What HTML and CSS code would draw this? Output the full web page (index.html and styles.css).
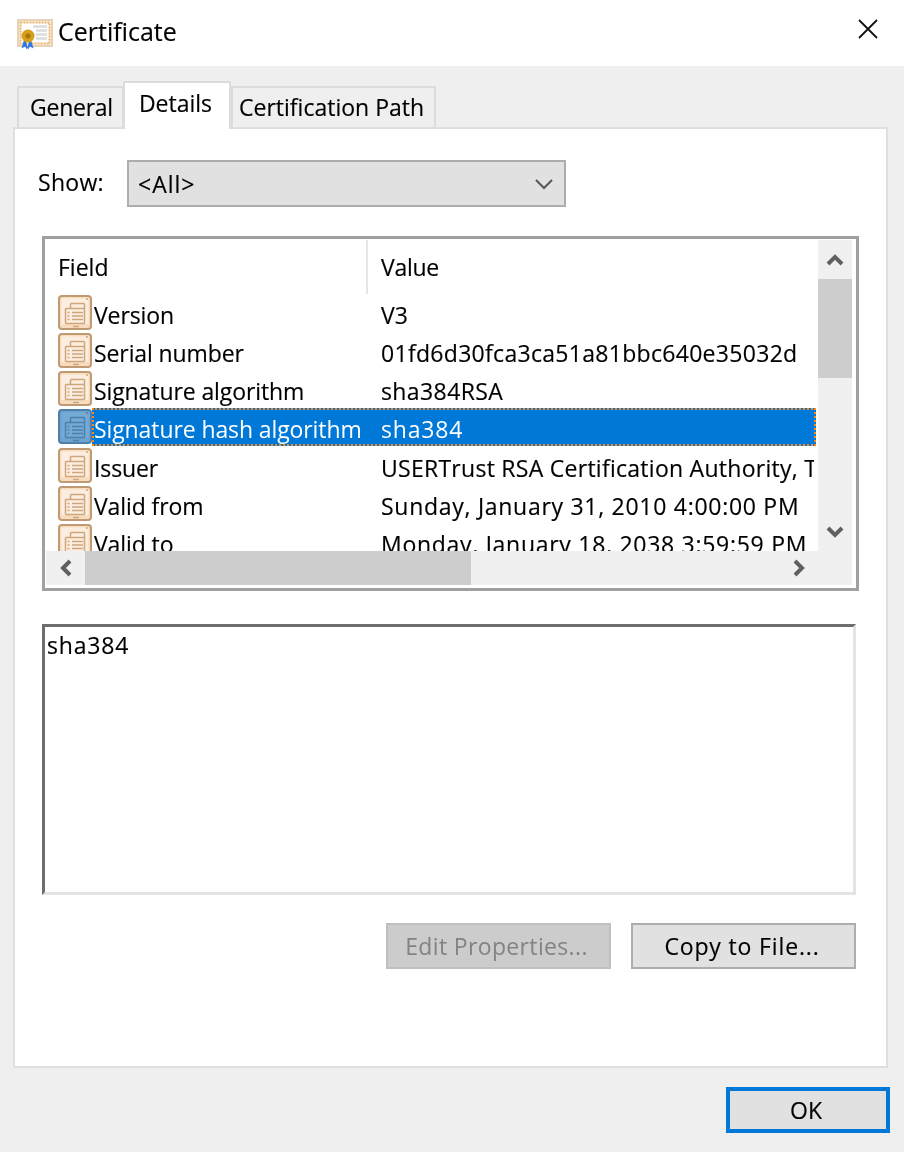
FILE: index.html
```html
<!DOCTYPE html>
<html lang="en">
<head>
<meta charset="utf-8">
<title>Certificate</title>
<link rel="stylesheet" href="styles.css">
</head>
<body>
<svg class="defs" width="0" height="0" aria-hidden="true">
  <symbol id="field-icon" viewBox="0 0 34 35">
    <rect class="ic-outer" x="1" y="1" width="32" height="33" rx="3"/>
    <rect class="ic-inner" x="3.500" y="3.500" width="27" height="25.500"/>
    <path class="ic-line" d="M7.500 13.500h19M7.500 13.500v15M26.500 8.500v20M7.500 28.500h19M12.500 8.500h14M12.500 8.500v5"/>
    <path class="ic-dash" d="M14 17.500h11M14 21h11M14 24.500h11M9.500 17.500h2M9.500 21h2M9.500 24.500h2M15 31.500h6M28 4h2"/>
  </symbol>
</svg>
<header class="titlebar">
  <svg class="cert-icon" width="38" height="32" viewBox="0 0 38 32">
    <rect x="1" y="1" width="34" height="26" fill="#fdf3e4" stroke="#e6d2b4" stroke-width="2"/>
    <rect x="3.500" y="3.500" width="29" height="21" fill="#fff" stroke="#eeb46e" stroke-width="2" stroke-dasharray="2 1"/>
    <path d="M16 7.500h14M19 11.500h11M19 15.500h11M19 19.500h11" stroke="#dcdcdc" stroke-width="2.500"/>
    <path d="M7 21l-2.500 8.500 3.500-2 2 3 2-8zM14 21l2.500 8.500-3.500-2-2 3-2-8z" fill="#2f76e6"/>
    <circle cx="11" cy="17" r="6.500" fill="#d79e1a"/>
    <circle cx="11" cy="17" r="2.500" fill="#a8760f"/>
  </svg>
  <h1 class="title">Certificate</h1>
  <svg class="close" width="20" height="20" viewBox="0 0 20 20"><path d="M1 1l18 18M19 1L1 19" stroke="#111" stroke-width="1.800" fill="none"/></svg>
</header>
<main class="dialog">
  <nav class="tabs">
    <div class="tab tab-general">General</div>
    <div class="tab tab-active">Details</div>
    <div class="tab tab-path">Certification Path</div>
  </nav>
  <section class="panel">
    <div class="show-row">
      <span class="show-label">Show:</span>
      <div class="select">
        <span class="select-text">&lt;All&gt;</span>
        <svg width="20" height="12" viewBox="0 0 20 12"><path d="M2 2l8 8 8-8" stroke="#555" stroke-width="2" fill="none"/></svg>
      </div>
    </div>
    <div class="list">
      <div class="viewport">
        <div class="list-head">
          <div class="head-field">Field</div>
          <div class="head-value">Value</div>
        </div>
        <div class="row"><svg class="row-icon"><use href="#field-icon"/></svg><div class="cells"><span class="cell-field">Version</span><span class="cell-value">V3</span></div></div>
        <div class="row"><svg class="row-icon"><use href="#field-icon"/></svg><div class="cells"><span class="cell-field">Serial number</span><span class="cell-value sp-serial">01fd6d30fca3ca51a81bbc640e35032d</span></div></div>
        <div class="row"><svg class="row-icon"><use href="#field-icon"/></svg><div class="cells"><span class="cell-field">Signature algorithm</span><span class="cell-value sp-algo">sha384RSA</span></div></div>
        <div class="row row-selected"><svg class="row-icon"><use href="#field-icon"/></svg><div class="cells"><span class="cell-field">Signature hash algorithm</span><span class="cell-value sp-hash">sha384</span></div></div>
        <div class="row"><svg class="row-icon"><use href="#field-icon"/></svg><div class="cells"><span class="cell-field">Issuer</span><span class="cell-value sp-issuer">USERTrust RSA Certification Authority, T</span></div></div>
        <div class="row"><svg class="row-icon"><use href="#field-icon"/></svg><div class="cells"><span class="cell-field">Valid from</span><span class="cell-value sp-date">Sunday, January 31, 2010 4:00:00 PM</span></div></div>
        <div class="row"><svg class="row-icon"><use href="#field-icon"/></svg><div class="cells"><span class="cell-field">Valid to</span><span class="cell-value sp-date">Monday, January 18, 2038 3:59:59 PM</span></div></div>
      </div>
      <div class="vbar">
        <div class="bar-btn-v"><svg width="18" height="12" viewBox="0 0 18 12"><path d="M2 10l7-7 7 7" class="chev"/></svg></div>
        <div class="vthumb"></div>
        <div class="bar-fill"></div>
        <div class="bar-btn-v"><svg width="18" height="12" viewBox="0 0 18 12"><path d="M2 2l7 7 7-7" class="chev"/></svg></div>
      </div>
      <div class="hbar">
        <div class="bar-btn-h"><svg width="12" height="18" viewBox="0 0 12 18"><path d="M10 2L3 9l7 7" class="chev"/></svg></div>
        <div class="hthumb"></div>
        <div class="bar-fill"></div>
        <div class="bar-btn-h"><svg width="12" height="18" viewBox="0 0 12 18"><path d="M2 2l7 7-7 7" class="chev"/></svg></div>
      </div>
      <div class="corner"></div>
    </div>
    <div class="detail"><span class="sp-hash">sha384</span></div>
    <div class="actions">
      <div class="btn btn-disabled">Edit Properties...</div>
      <div class="btn btn-copy">Copy to File...</div>
    </div>
  </section>
  <footer class="footer">
    <div class="btn btn-default">OK</div>
  </footer>
</main>
</body>
</html>
```
FILE: styles.css
```css
* { box-sizing: border-box; }
html, body { margin: 0; padding: 0; }
html { background: #efefef; }
body {
  width: 904px;
  height: 1152px;
  overflow: hidden;
  display: flex;
  flex-direction: column;
  background: #efefef;
  color: #000;
  font-family: "Open Sans", "Noto Sans", sans-serif;
  font-size: 23px;
  line-height: 30px;
  filter: blur(0.45px);
  -webkit-text-stroke: 0.15px #000;
}
.defs { position: absolute; }
.titlebar {
  height: 66px;
  flex: none;
  display: flex;
  align-items: center;
  padding: 0 26px 4px 17px;
  background: #fff;
}
.cert-icon { margin-top: 8px; }
.title {
  margin: 0 0 0 3px;
  font-size: 25px;
  font-weight: 400;
  flex: 1;
}
.close { margin-top: -4px; }
.dialog { flex: 1; display: flex; flex-direction: column; padding-left: 13px; padding-right: 16px; }
.tabs { height: 61px; display: flex; align-items: flex-end; padding-left: 4px; position: relative; z-index: 1; }
.tab {
  height: 41px;
  background: #efefef;
  border: 2px solid #dcdcdc;
  border-bottom: 0;
  white-space: nowrap;
}
.tab-general { padding: 4px 9px 0 11px; letter-spacing: -0.25px; }
.tab-active {
  height: 48px;
  margin: 0 0 -2px -1px;
  padding: 5px 17px 0 14px;
  background: #fff;
  position: relative;
}
.tab-path { padding: 4px 10px 0 6px; }
.panel {
  height: 941px;
  flex: none;
  background: #fff;
  border: 2px solid #dfdfdf;
  padding: 31px 0 0 27px;
  display: flex;
  flex-direction: column;
}
.show-row { display: flex; align-items: center; height: 47px; margin-left: -4px; }
.show-label { width: 89px; margin-top: -4px; letter-spacing: 0.3px; }
.select {
  width: 439px;
  height: 47px;
  display: flex;
  align-items: center;
  justify-content: space-between;
  padding: 0 10px 0 9px;
  background: #e1e1e1;
  border: 2px solid #adadad;
}
.select-text { letter-spacing: 1px; }
.list {
  width: 817px;
  height: 355px;
  margin-top: 29px;
  border: 3px solid #a0a0a0;
  padding: 1px 4px 3px 1px;
  display: grid;
  grid-template-columns: 1fr 34px;
  grid-template-rows: 1fr 34px;
}
.viewport { overflow: hidden; min-width: 0; min-height: 0; }
.list-head { display: flex; height: 53.5px; }
.head-field { width: 322px; height: 54px; padding: 12px 0 0 12px; border-right: 2px solid #e6e6e6; }
.head-value { padding: 12px 0 0 13px; letter-spacing: -0.3px; }
.row { display: flex; height: 38.3px; padding-left: 12px; }
.row-icon { width: 34px; height: 35px; flex: none; margin-top: 1px; --bg: #f8dcc0; --edge: #bf9a72; --inner: #fbeee0; --mark: #cfa67c; }
.cells {
  flex: 1;
  min-width: 0;
  margin-right: 2px;
  height: 38px;
  padding-top: 4px;
  display: flex;
  white-space: nowrap;
  overflow: hidden;
  border: 2px solid transparent;
}
.cell-field { width: 273px; flex: none; letter-spacing: -0.1px; }
.cell-value { padding-left: 14px; }
.sp-serial { letter-spacing: 0.3px; }
.sp-algo { letter-spacing: 0.4px; }
.sp-hash { letter-spacing: 0.8px; }
.sp-date { letter-spacing: 0.72px; }
.sp-issuer { letter-spacing: 0.27px; }
.row-selected .cells { background: #0078d7; color: #fff; -webkit-text-stroke: 0; border: 2px dotted #f58a1f; }
.row-selected .row-icon { --bg: #6fa3cf; --edge: #4f7fa8; --inner: #76aad6; --mark: #4d80ab; }
.ic-outer { fill: var(--bg); stroke: var(--edge); stroke-width: 2; }
.ic-inner { fill: var(--inner); stroke: none; }
.ic-line { fill: none; stroke: var(--mark); stroke-width: 1.500; }
.ic-dash { fill: none; stroke: var(--mark); stroke-width: 1.500; }
.vbar, .hbar, .corner { background: #f0f0f0; }
.vbar { display: flex; flex-direction: column; }
.hbar { display: flex; }
.bar-btn-v { height: 39px; flex: none; display: flex; align-items: center; justify-content: center; }
.bar-btn-h { width: 39px; flex: none; display: flex; align-items: center; justify-content: center; }
.bar-fill { flex: 1; }
.vthumb { height: 99px; background: #cdcdcd; flex: none; }
.hthumb { width: 386px; background: #cdcdcd; flex: none; }
.chev { fill: none; stroke: #606060; stroke-width: 4; }
.detail {
  width: 814px;
  height: 271px;
  flex: none;
  margin-top: 33px;
  padding: 3px 2px;
  background: #fff;
  border: 3px solid;
  border-color: #6d6d6d #e3e3e3 #e3e3e3 #6d6d6d;
}
.actions { width: 814px; margin-top: 28px; display: flex; justify-content: flex-end; gap: 20px; }
.btn {
  width: 225px;
  height: 46px;
  display: flex;
  align-items: center;
  justify-content: center;
  background: #e1e1e1;
  border: 2px solid #adadad;
}
.btn-copy { letter-spacing: 0.85px; padding-right: 3px; }
.btn-disabled { background: #ccc; border-color: #bfbfbf; color: #838383; letter-spacing: 0.35px; -webkit-text-stroke: 0; padding-right: 4px; }
.footer { display: flex; justify-content: flex-end; padding-top: 19px; margin-right: -2px; }
.btn-default { width: 164px; border: 4px solid #0078d7; padding-right: 4px; }
```
